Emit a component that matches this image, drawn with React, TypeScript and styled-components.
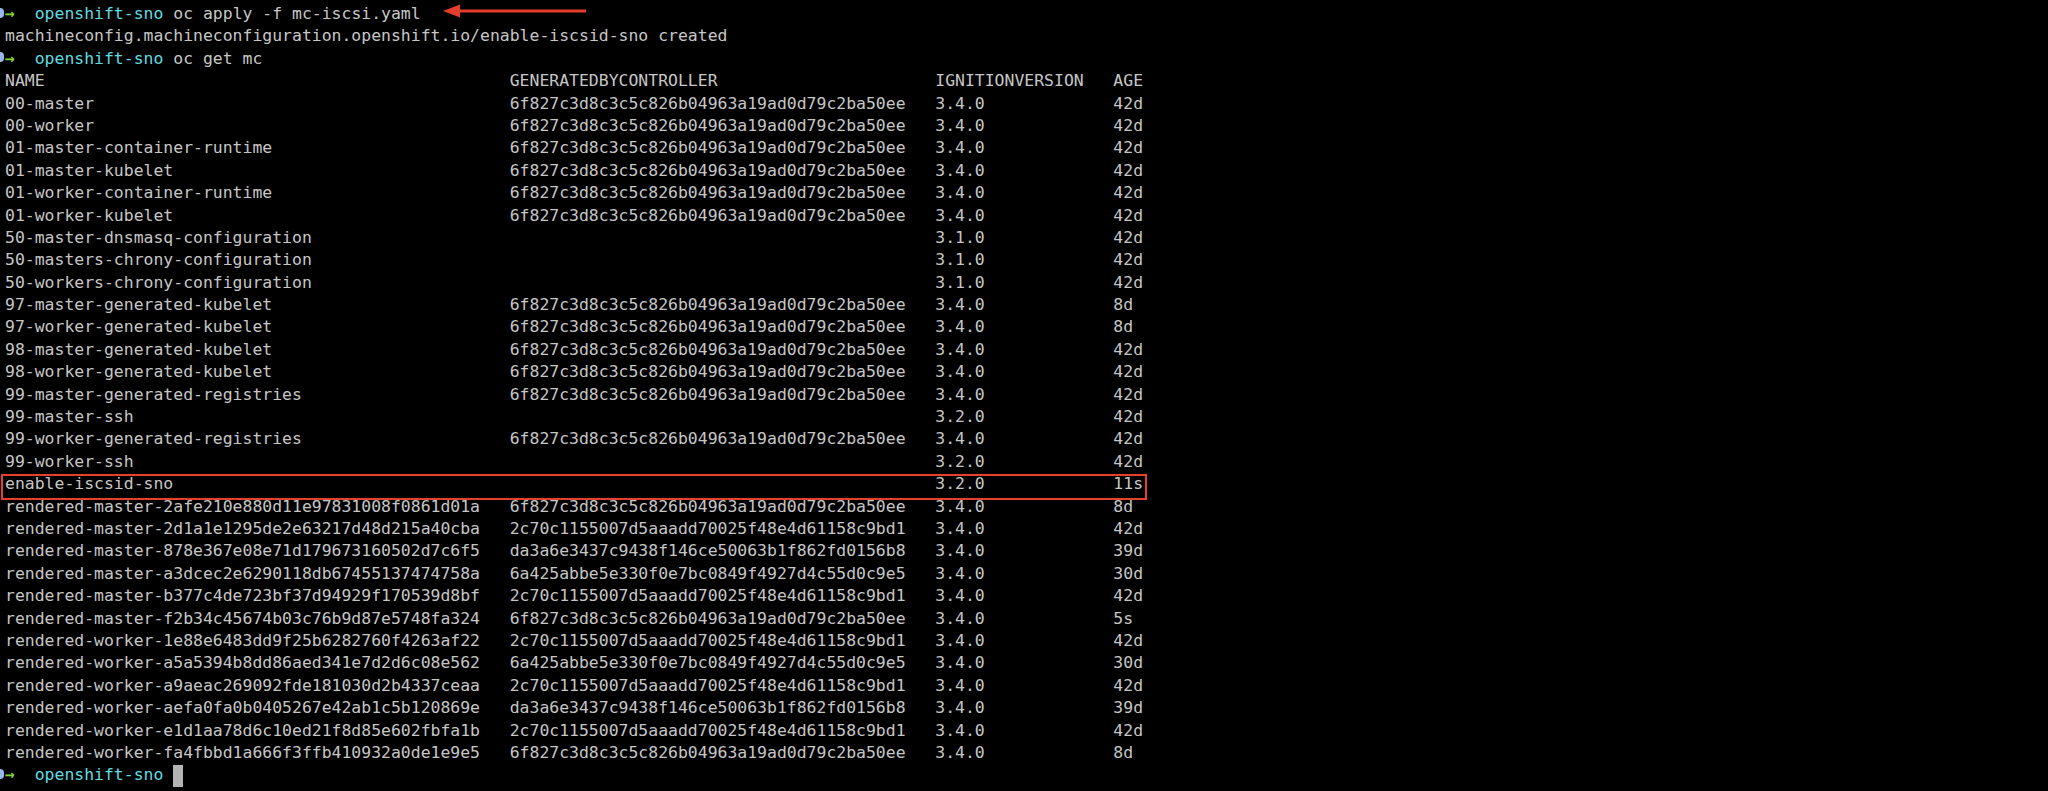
import React from "react";
import styled, { createGlobalStyle } from "styled-components";

const GlobalStyle = createGlobalStyle`
  html, body {
    margin: 0;
    padding: 0;
    background: #000;
  }
  body {
    width: 2048px;
    height: 791px;
    overflow: hidden;
  }
`;

const HASH_A = "6f827c3d8c3c5c826b04963a19ad0d79c2ba50ee";
const HASH_B = "2c70c1155007d5aaadd70025f48e4d61158c9bd1";
const HASH_C = "da3a6e3437c9438f146ce50063b1f862fd0156b8";
const HASH_D = "6a425abbe5e330f0e7bc0849f4927d4c55d0c9e5";

type McRow = { name: string; gen: string; ign: string; age: string; highlight?: boolean };

const rows: McRow[] = [
  { name: "00-master", gen: HASH_A, ign: "3.4.0", age: "42d" },
  { name: "00-worker", gen: HASH_A, ign: "3.4.0", age: "42d" },
  { name: "01-master-container-runtime", gen: HASH_A, ign: "3.4.0", age: "42d" },
  { name: "01-master-kubelet", gen: HASH_A, ign: "3.4.0", age: "42d" },
  { name: "01-worker-container-runtime", gen: HASH_A, ign: "3.4.0", age: "42d" },
  { name: "01-worker-kubelet", gen: HASH_A, ign: "3.4.0", age: "42d" },
  { name: "50-master-dnsmasq-configuration", gen: "", ign: "3.1.0", age: "42d" },
  { name: "50-masters-chrony-configuration", gen: "", ign: "3.1.0", age: "42d" },
  { name: "50-workers-chrony-configuration", gen: "", ign: "3.1.0", age: "42d" },
  { name: "97-master-generated-kubelet", gen: HASH_A, ign: "3.4.0", age: "8d" },
  { name: "97-worker-generated-kubelet", gen: HASH_A, ign: "3.4.0", age: "8d" },
  { name: "98-master-generated-kubelet", gen: HASH_A, ign: "3.4.0", age: "42d" },
  { name: "98-worker-generated-kubelet", gen: HASH_A, ign: "3.4.0", age: "42d" },
  { name: "99-master-generated-registries", gen: HASH_A, ign: "3.4.0", age: "42d" },
  { name: "99-master-ssh", gen: "", ign: "3.2.0", age: "42d" },
  { name: "99-worker-generated-registries", gen: HASH_A, ign: "3.4.0", age: "42d" },
  { name: "99-worker-ssh", gen: "", ign: "3.2.0", age: "42d" },
  { name: "enable-iscsid-sno", gen: "", ign: "3.2.0", age: "11s", highlight: true },
  { name: "rendered-master-2afe210e880d11e97831008f0861d01a", gen: HASH_A, ign: "3.4.0", age: "8d" },
  { name: "rendered-master-2d1a1e1295de2e63217d48d215a40cba", gen: HASH_B, ign: "3.4.0", age: "42d" },
  { name: "rendered-master-878e367e08e71d179673160502d7c6f5", gen: HASH_C, ign: "3.4.0", age: "39d" },
  { name: "rendered-master-a3dcec2e6290118db67455137474758a", gen: HASH_D, ign: "3.4.0", age: "30d" },
  { name: "rendered-master-b377c4de723bf37d94929f170539d8bf", gen: HASH_B, ign: "3.4.0", age: "42d" },
  { name: "rendered-master-f2b34c45674b03c76b9d87e5748fa324", gen: HASH_A, ign: "3.4.0", age: "5s" },
  { name: "rendered-worker-1e88e6483dd9f25b6282760f4263af22", gen: HASH_B, ign: "3.4.0", age: "42d" },
  { name: "rendered-worker-a5a5394b8dd86aed341e7d2d6c08e562", gen: HASH_D, ign: "3.4.0", age: "30d" },
  { name: "rendered-worker-a9aeac269092fde181030d2b4337ceaa", gen: HASH_B, ign: "3.4.0", age: "42d" },
  { name: "rendered-worker-aefa0fa0b0405267e42ab1c5b120869e", gen: HASH_C, ign: "3.4.0", age: "39d" },
  { name: "rendered-worker-e1d1aa78d6c10ed21f8d85e602fbfa1b", gen: HASH_B, ign: "3.4.0", age: "42d" },
  { name: "rendered-worker-fa4fbbd1a666f3ffb410932a0de1e9e5", gen: HASH_A, ign: "3.4.0", age: "8d" },
];

const Terminal = styled.div`
  display: flex;
  flex-direction: column;
  padding-top: 3px;
  font-family: "DejaVu Sans Mono", "Liberation Mono", monospace;
  font-size: 16.45px;
  line-height: 22.4px;
  color: #c6c6c6;
  white-space: pre;
`;

const Line = styled.div`
  display: flex;
  align-items: center;
  height: 22.4px;
`;

const Gutter = styled.span`
  flex: 0 0 5px;
  width: 5px;
  height: 22.4px;
  display: flex;
  align-items: center;
`;

const MarkShape = styled.span`
  display: block;
  width: 4px;
  height: 10px;
  margin-top: -3px;
  background: #9ab8ee;
  border-radius: 0 5px 5px 0;
`;

const Arrow = styled.span`
  display: inline-block;
  width: 1ch;
  color: #7fd13b;
  font-weight: bold;
`;

const Dir = styled.span`
  color: #62dbe0;
`;

const Cursor = styled.span`
  display: inline-block;
  width: 1ch;
  height: 22px;
  margin-top: 2px;
  background: #b4b4b4;
`;

const Pointer = styled.svg`
  display: block;
  margin-left: 22px;
  margin-top: -6px;
`;

const Row = styled.div<{ $highlight?: boolean }>`
  position: relative;
  display: grid;
  grid-template-columns: 51ch 43ch 18ch auto;
  height: 22.4px;
  padding-left: 5px;
  ${(p) =>
    p.$highlight &&
    `
    &::after {
      content: "";
      position: absolute;
      left: 1px;
      top: 1px;
      width: calc(8px + 115ch);
      height: 26px;
      box-sizing: border-box;
      border: 2px solid #e6402e;
      pointer-events: none;
    }
  `}
`;

const Prompt: React.FC<{ cmd?: string; cursor?: boolean; pointer?: boolean }> = ({ cmd, cursor, pointer }) => (
  <Line>
    <Gutter>
      <MarkShape />
    </Gutter>
    <Arrow>→</Arrow>
    <span>{"  "}</span>
    <Dir>openshift-sno</Dir>
    <span>{" "}</span>
    {cmd && <span>{cmd}</span>}
    {cursor && <Cursor />}
    {pointer && (
      <Pointer width="143" height="16" viewBox="0 0 143 16">
        <polygon points="0,8 17,1.5 17,14.5" fill="#e53d2c" />
        <rect x="15" y="6.5" width="128" height="3" fill="#e53d2c" />
      </Pointer>
    )}
  </Line>
);

export default function App() {
  return (
    <>
      <GlobalStyle />
      <Terminal>
        <Prompt cmd="oc apply -f mc-iscsi.yaml" pointer />
        <Row>
          <span>machineconfig.machineconfiguration.openshift.io/enable-iscsid-sno created</span>
        </Row>
        <Prompt cmd="oc get mc" />
        <Row>
          <span>NAME</span>
          <span>GENERATEDBYCONTROLLER</span>
          <span>IGNITIONVERSION</span>
          <span>AGE</span>
        </Row>
        {rows.map((r) => (
          <Row key={r.name} $highlight={r.highlight}>
            <span>{r.name}</span>
            <span>{r.gen}</span>
            <span>{r.ign}</span>
            <span>{r.age}</span>
          </Row>
        ))}
        <Prompt cursor />
      </Terminal>
    </>
  );
}
